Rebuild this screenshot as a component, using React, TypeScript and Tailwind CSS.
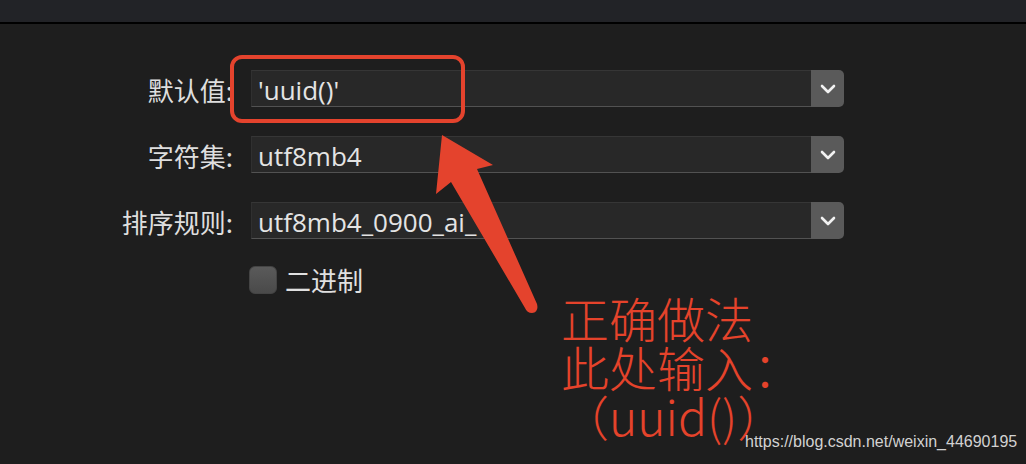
import React from 'react'

const cjk = "font-['Noto_Sans_CJK_SC','Noto_Sans',sans-serif]"
const latin = "font-['Open_Sans','Noto_Sans_CJK_SC',sans-serif]"

// Chevron inside the grey pop-up button
const Chevron = () => (
  <svg width="16" height="10" viewBox="0 0 16 10" fill="none">
    <polyline points="2,2 8,8 14,2" stroke="#f2f2f2" strokeWidth="2.6" strokeLinecap="round" strokeLinejoin="round" />
  </svg>
)

const ComboField = ({ value }: { value: string }) => (
  <div className="flex h-[37px] w-[593px]">
    <div
      className={`flex-1 flex items-center bg-[#282828] border-t border-t-[#363636] border-b border-b-[#525252] border-l border-l-[#303030] pl-[6px] pt-[3px] text-[26px] leading-none text-[#e4e4e4] ${latin}`}
    >
      {value}
    </div>
    <div className="w-[33px] h-full bg-[#5a5a5a] rounded-r-[5px] flex items-center justify-center">
      <Chevron />
    </div>
  </div>
)

const Label = ({ children }: { children: React.ReactNode }) => (
  <div className={`h-[37px] flex items-center justify-end pt-[3px] text-[26px] leading-none text-[#dedede] ${cjk}`}>
    {children}
  </div>
)

export default function App() {
  return (
    <div className="relative w-[1026px] h-[464px] overflow-hidden bg-[#1e1e1e]">
      {/* window toolbar strip */}
      <div className="h-[24px] bg-[#222327] border-b-2 border-black" />

      {/* form */}
      <div className="pt-[46px] grid grid-cols-[233px_593px] gap-x-[18px] gap-y-[29px]">
        <Label>默认值:</Label>
        <ComboField value="'uuid()'" />

        <Label>字符集:</Label>
        <ComboField value="utf8mb4" />

        <Label>排序规则:</Label>
        <ComboField value="utf8mb4_0900_ai_" />

        <div />
        <div className="-mt-[2px] -ml-[2px] flex items-center gap-[8px] h-[28px]">
          <div className="w-[28px] h-[28px] rounded-[6px] bg-gradient-to-b from-[#5a5a5a] to-[#4a4a4a] border border-[#444]" />
          <span className={`text-[26px] leading-none text-[#e0e0e0] ${cjk}`}>二进制</span>
        </div>
      </div>

      {/* annotation: red frame around the default value */}
      <div className="absolute left-[230px] top-[55px] w-[235px] h-[68px] border-4 border-[#e4432d] rounded-[12px] pointer-events-none" />

      {/* annotation: arrow */}
      <svg className="absolute inset-0 pointer-events-none" width="1026" height="464" viewBox="0 0 1026 464">
        <path
          d="M442 135 L493 165 L477 169 L537 304 Q539 312 532 313 Q527 313 525 308 L451 182 L436 194 Z"
          fill="#e4432d"
        />
      </svg>

      {/* annotation: note text */}
      <div className={`absolute left-[561px] top-[293px] text-[48px] leading-[49px] font-light text-[#e5432b] ${cjk}`}>
        <div>正确做法</div>
        <div>此处输入：</div>
        <div>（uuid()）</div>
      </div>

      {/* watermark */}
      <div className="absolute left-[745px] top-[434px] text-[16px] leading-none text-[#d2d2d2] font-['Liberation_Sans',Arial,sans-serif]">
        https://blog.csdn.net/weixin_44690195
      </div>
    </div>
  )
}
